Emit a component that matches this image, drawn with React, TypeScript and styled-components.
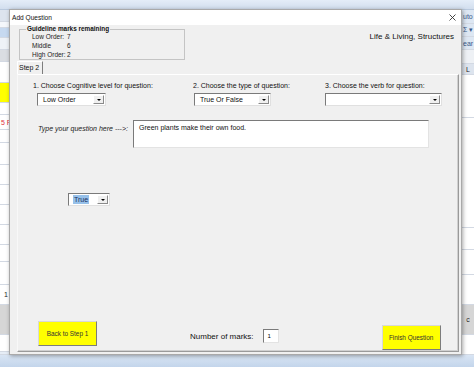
import styled, { createGlobalStyle } from "styled-components";

const GlobalStyle = createGlobalStyle`
  html, body {
    margin: 0;
    padding: 0;
  }
  body {
    width: 474px;
    height: 367px;
    overflow: hidden;
    font-family: "Liberation Sans", Arial, sans-serif;
    color: #000;
  }
`;

// ---- spreadsheet behind the dialog ----

const Sheet = styled.div`
  position: relative;
  width: 474px;
  height: 367px;
  display: flex;
  flex-direction: column;
  background: #fff;
  overflow: hidden;
`;

const Ribbon = styled.div`
  height: 9px;
  background: linear-gradient(#e4edf8, #d2deee);
  border-bottom: 1px solid #b9c9dd;
`;

const SheetBody = styled.div`
  flex: 1;
  display: flex;
`;

const Pane = styled.div<{ $w: number }>`
  width: ${(p) => p.$w}px;
  display: flex;
  flex-direction: column;
`;

const Filler = styled.div`
  flex: 1;
  background: #fff;
`;

const Cell = styled.div<{ $h: number; $bg?: string; $color?: string; $align?: string }>`
  box-sizing: border-box;
  height: ${(p) => p.$h}px;
  background: ${(p) => p.$bg || "#fff"};
  color: ${(p) => p.$color || "#222"};
  border-bottom: 1px solid #d3d9e3;
  font-size: 7px;
  display: flex;
  align-items: center;
  justify-content: ${(p) => p.$align || "flex-start"};
  white-space: nowrap;
  padding: 0 1px;
`;

const StatusBar = styled.div`
  height: 12px;
  background: linear-gradient(#d9e5f4, #c3d5eb);
`;

// ---- dialog ----

const Dialog = styled.div`
  position: absolute;
  left: 9px;
  top: 9px;
  width: 453px;
  height: 346px;
  box-sizing: border-box;
  border: 1px solid #a9a9a9;
  box-shadow: 1px 1px 4px rgba(0, 0, 0, 0.35);
  display: flex;
  flex-direction: column;
  background: #f0f0f0;
`;

const TitleBar = styled.div`
  height: 15px;
  background: #fff;
  display: flex;
  align-items: center;
  justify-content: space-between;
  padding: 0 5px 0 2px;
`;

const Title = styled.span`
  font-size: 6.6px;
  color: #111;
`;

const DialogBody = styled.div`
  flex: 1;
  display: flex;
  flex-direction: column;
`;

const Header = styled.div`
  display: flex;
  justify-content: space-between;
  align-items: flex-start;
  padding: 0 7px 0 9px;
`;

const GroupBox = styled.fieldset`
  box-sizing: border-box;
  width: 166px;
  height: 35px;
  margin: 0;
  padding: 0;
  border: 1px solid #c4c4c4;
`;

const Legend = styled.legend`
  margin-left: 6px;
  padding: 0 1px;
  font-size: 6.4px;
  font-weight: bold;
  line-height: 8px;
  color: #111;
`;

const MarksGrid = styled.div`
  display: grid;
  grid-template-columns: 35px auto;
  grid-auto-rows: 9px;
  align-items: center;
  padding-left: 12px;
  margin-top: -1px;
  font-size: 6.5px;
  color: #222;
`;

const Topic = styled.div`
  margin-top: 7px;
  font-size: 8px;
  color: #111;
`;

const TabArea = styled.div`
  flex: 1;
  display: flex;
  flex-direction: column;
  margin: 1px 2px 2px 7px;
`;

const TabStrip = styled.div`
  display: flex;
`;

const Tab = styled.div`
  height: 12px;
  line-height: 12px;
  padding: 0 3px 0 1px;
  font-size: 7px;
  color: #111;
  border-top: 1px solid #fff;
  border-left: 1px solid #fff;
  border-right: 1px solid #7d7d7d;
`;

const TabPage = styled.div`
  flex: 1;
  display: flex;
  flex-direction: column;
  border-top: 1px solid #fff;
  border-left: 1px solid #f8f8f8;
  border-right: 1px solid #9a9a9a;
  border-bottom: 1px solid #9a9a9a;
  box-shadow: inset -1px -1px 0 #d0d0d0;
  padding: 6px 17px 1px 15px;
`;

const ChooseRow = styled.div`
  display: grid;
  grid-template-columns: 160px 132px 1fr;
`;

const Field = styled.div`
  display: flex;
  flex-direction: column;
  gap: 3px;
`;

const FieldLabel = styled.div`
  font-size: 7px;
  line-height: 9px;
  color: #111;
`;

const Combo = styled.div<{ $w: number; $indent?: number }>`
  box-sizing: border-box;
  width: ${(p) => p.$w}px;
  height: 13px;
  margin-left: ${(p) => p.$indent || 0}px;
  display: flex;
  align-items: stretch;
  background: #fff;
  border-top: 1px solid #7a7a7a;
  border-left: 1px solid #7a7a7a;
  border-right: 1px solid #e0e0e0;
  border-bottom: 1px solid #e0e0e0;
`;

const ComboText = styled.div`
  flex: 1;
  display: flex;
  align-items: center;
  padding-left: 5px;
  font-size: 7px;
  color: #111;
  white-space: nowrap;
  overflow: hidden;
`;

const ComboButton = styled.div`
  width: 9px;
  margin: 1px;
  background: #f0f0f0;
  border-top: 1px solid #fff;
  border-left: 1px solid #fff;
  border-right: 1px solid #8a8a8a;
  border-bottom: 1px solid #8a8a8a;
  display: flex;
  align-items: center;
  justify-content: center;

  &::after {
    content: "";
    border-left: 2px solid transparent;
    border-right: 2px solid transparent;
    border-top: 2px solid #000;
  }
`;

const Selected = styled.span`
  background: #97c1ea;
  color: #1b2f5c;
  padding: 1px 1px;
  margin-left: -1px;
`;

const QuestionRow = styled.div`
  display: flex;
  align-items: flex-start;
  margin-top: 14px;
  padding-left: 5px;
`;

const QuestionLabel = styled.div`
  width: 95px;
  margin-top: 5px;
  font-size: 7px;
  font-style: italic;
  color: #222;
  white-space: nowrap;
`;

const TextBox = styled.div`
  box-sizing: border-box;
  width: 296px;
  height: 28px;
  padding: 2px 5px;
  background: #fff;
  border-top: 1px solid #7a7a7a;
  border-left: 1px solid #7a7a7a;
  border-right: 1px solid #e3e3e3;
  border-bottom: 1px solid #e3e3e3;
  font-size: 7px;
  line-height: 9px;
  color: #111;
`;

const AnswerRow = styled.div`
  margin-top: 45px;
  padding-left: 35px;
`;

const BottomRow = styled.div`
  margin-top: auto;
  display: flex;
  align-items: flex-end;
`;

const YellowButton = styled.button<{ $gap?: number; $lift?: number }>`
  box-sizing: border-box;
  width: 59px;
  height: 25px;
  margin: 0 0 ${(p) => p.$lift || 0}px ${(p) => p.$gap || 0}px;
  padding: 0;
  background: #ffff00;
  border: 1px solid;
  border-color: #d8d8d8 #7c7c7c #7c7c7c #d8d8d8;
  font-family: "Liberation Sans", Arial, sans-serif;
  font-size: 6.4px;
  color: #333;
`;

const MarksGroup = styled.div`
  display: flex;
  align-items: center;
  gap: 9px;
  margin: 0 0 7px 93px;
`;

const MarksLabel = styled.span`
  font-size: 8px;
  color: #111;
`;

const MarksInput = styled.div`
  box-sizing: border-box;
  width: 16px;
  height: 14px;
  padding-left: 4px;
  display: flex;
  align-items: center;
  background: #fff;
  border-top: 1px solid #7a7a7a;
  border-left: 1px solid #7a7a7a;
  border-right: 1px solid #e3e3e3;
  border-bottom: 1px solid #e3e3e3;
  font-size: 6px;
`;

const CloseIcon = () => (
  <svg width="7" height="7" viewBox="0 0 7 7">
    <path d="M0.5 0.5 L6.5 6.5 M6.5 0.5 L0.5 6.5" stroke="#333" strokeWidth="0.9" />
  </svg>
);

type SheetCell = { h: number; bg?: string; text?: string; color?: string; align?: string };

const leftCells: SheetCell[] = [
  { h: 12, bg: "#dde4ee" },
  { h: 6, bg: "#f4f7fb" },
  { h: 10, bg: "#c6d9f0" },
  { h: 12, bg: "#eef2f7" },
  { h: 12, bg: "#dadde2" },
  { h: 21 },
  { h: 20, bg: "#ffff00" },
  { h: 12 },
  { h: 15, text: "5 F", color: "#e0303a" },
  { h: 13 },
  { h: 22 },
  { h: 20 },
  { h: 20 },
  { h: 20 },
  { h: 20 },
  { h: 17 },
  { h: 23 },
  { h: 20, text: "1", align: "flex-end" },
  { h: 30, bg: "#d6d6d6" },
  { h: 17 },
  { h: 3, bg: "#e6edf6" },
];

const rightCells: SheetCell[] = [
  { h: 14, bg: "#dde7f3", text: "uto", color: "#3a5a8a" },
  { h: 13, bg: "#dde7f3", text: "Σ ▾", color: "#3a5a8a" },
  { h: 13, bg: "#dde7f3", text: "ear", color: "#3a5a8a" },
  { h: 14, bg: "#eef1f5" },
  { h: 11, bg: "#dde4ee", text: "L", align: "center" },
  { h: 43 },
  { h: 110 },
  { h: 22 },
  { h: 25 },
  { h: 30 },
  { h: 30, bg: "#d6d6d6", text: "c", align: "center" },
  { h: 20 },
];

export default function App() {
  return (
    <>
      <GlobalStyle />
      <Sheet>
        <Ribbon />
        <SheetBody>
          <Pane $w={9}>
            {leftCells.map((c, i) => (
              <Cell key={i} $h={c.h} $bg={c.bg} $color={c.color} $align={c.align}>
                {c.text}
              </Cell>
            ))}
          </Pane>
          <Filler />
          <Pane $w={12}>
            {rightCells.map((c, i) => (
              <Cell key={i} $h={c.h} $bg={c.bg} $color={c.color} $align={c.align}>
                {c.text}
              </Cell>
            ))}
          </Pane>
        </SheetBody>
        <StatusBar />

        <Dialog>
          <TitleBar>
            <Title>Add Question</Title>
            <CloseIcon />
          </TitleBar>
          <DialogBody>
            <Header>
              <GroupBox>
                <Legend>Guideline marks remaining</Legend>
                <MarksGrid>
                  <span>Low Order:</span>
                  <span>7</span>
                  <span>Middle</span>
                  <span>6</span>
                  <span>High Order:</span>
                  <span>2</span>
                </MarksGrid>
              </GroupBox>
              <Topic>Life &amp; Living, Structures</Topic>
            </Header>

            <TabArea>
              <TabStrip>
                <Tab>Step 2</Tab>
              </TabStrip>
              <TabPage>
                <ChooseRow>
                  <Field>
                    <FieldLabel>1. Choose Cognitive level for question:</FieldLabel>
                    <Combo $w={69} $indent={4}>
                      <ComboText>Low Order</ComboText>
                      <ComboButton />
                    </Combo>
                  </Field>
                  <Field>
                    <FieldLabel>2. Choose the type of question:</FieldLabel>
                    <Combo $w={77} $indent={1}>
                      <ComboText>True Or False</ComboText>
                      <ComboButton />
                    </Combo>
                  </Field>
                  <Field>
                    <FieldLabel>3. Choose the verb for question:</FieldLabel>
                    <Combo $w={117}>
                      <ComboText />
                      <ComboButton />
                    </Combo>
                  </Field>
                </ChooseRow>

                <QuestionRow>
                  <QuestionLabel>Type your question here ---&gt;:</QuestionLabel>
                  <TextBox>Green plants make their own food.</TextBox>
                </QuestionRow>

                <AnswerRow>
                  <Combo $w={42}>
                    <ComboText>
                      <Selected>True</Selected>
                    </ComboText>
                    <ComboButton />
                  </Combo>
                </AnswerRow>

                <BottomRow>
                  <YellowButton $gap={5} $lift={4}>Back to Step 1</YellowButton>
                  <MarksGroup>
                    <MarksLabel>Number of marks:</MarksLabel>
                    <MarksInput>1</MarksInput>
                  </MarksGroup>
                  <YellowButton $gap={103}>Finish Question</YellowButton>
                </BottomRow>
              </TabPage>
            </TabArea>
          </DialogBody>
        </Dialog>
      </Sheet>
    </>
  );
}
